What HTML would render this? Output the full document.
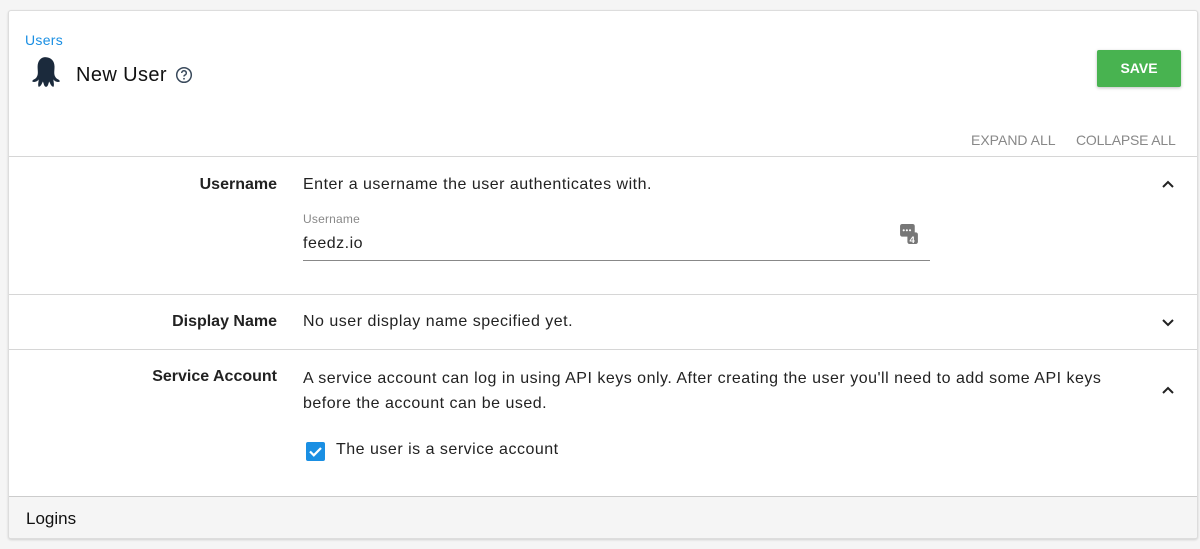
<!DOCTYPE html>
<html><head><style>
body{margin:0;background:#f5f5f5;font-family:"Liberation Sans",Roboto,sans-serif;color:#222;}
.card{position:absolute;left:8px;top:10px;width:1188px;height:527px;background:#fff;border:1px solid #ddd;border-radius:3px;box-shadow:0 1px 2px rgba(0,0,0,.15);overflow:hidden}
.abs{position:absolute}
.line{position:absolute;left:0;width:1188px;height:1px;background:#d6d6d6}
.lab{position:absolute;right:920px;font-weight:bold;font-size:16px;text-align:right}
.txt{position:absolute;left:294px;font-size:16px;color:#222;letter-spacing:0.5px}
.chev{position:absolute;left:1152px;width:14px;height:10px}
</style></head><body>
<div class="card">
<div class="abs" style="left:16px;top:21px;color:#1a8fe3;font-size:14px;letter-spacing:0.3px">Users</div>
<svg class="abs" style="left:18px;top:45px" width="36" height="32" viewBox="0 0 34 30"><path d="M17 1c6 0 9 4 9 9 0 4-1 7 1 10 1 2 4 2 4 4-2 1-5 0-6-2 0 3 1 5 0 7-2 0-3-3-4-5-1 2-1 5-3 5-2 0-2-3-3-5-1 2-2 5-4 5-1-2 0-4 0-7-1 2-4 3-6 2 0-2 3-2 4-4 2-3 1-6 1-10 0-5 3-9 7-9z" fill="#1b2a3c"/></svg>
<div class="abs" style="left:67px;top:53px;font-size:20px;color:#111;letter-spacing:0.4px">New User</div>
<svg class="abs" style="left:166px;top:55px" width="18" height="18" viewBox="0 0 18 18"><circle cx="9" cy="9" r="7.3" fill="none" stroke="#3a4a5c" stroke-width="1.5"/><path d="M6.7 7a2.3 2.3 0 1 1 3 2.2c-.6.3-.7.7-.7 1.3" fill="none" stroke="#3a4a5c" stroke-width="1.5"/><circle cx="9" cy="12.8" r=".9" fill="#3a4a5c"/></svg>
<div class="abs" style="left:1088px;top:39px;width:84px;height:37px;background:#48b350;border-radius:2px;color:#fff;font-size:14px;font-weight:bold;text-align:center;line-height:37px;box-shadow:0 1px 3px rgba(0,0,0,.25)">SAVE</div>
<div class="abs" style="left:962px;top:121px;font-size:14px;color:#888">EXPAND ALL</div>
<div class="abs" style="left:1067px;top:121px;font-size:14px;color:#888;letter-spacing:-0.2px">COLLAPSE ALL</div>
<div class="line" style="top:145px"></div>
<div class="lab" style="top:165px">Username</div>
<div class="txt" style="top:165px">Enter a username the user authenticates with.</div>
<svg class="chev" style="top:168px" viewBox="0 0 14 10"><path d="M2 8l5-5 5 5" fill="none" stroke="#222" stroke-width="2"/></svg>
<div class="txt" style="top:201px;font-size:12px;color:#888;letter-spacing:0.2px">Username</div>
<div class="txt" style="top:224px">feedz.io</div>
<svg class="abs" style="left:891px;top:213px" width="19" height="21" viewBox="0 0 18 20"><rect x="0" y="0" width="14" height="12" rx="2" fill="#777"/><rect x="7" y="8" width="10" height="11" rx="2" fill="#777"/><circle cx="3.5" cy="6" r="1" fill="#fff"/><circle cx="6.5" cy="6" r="1" fill="#fff"/><circle cx="9.5" cy="6" r="1" fill="#fff"/><text x="9" y="18" font-size="9" font-weight="bold" fill="#fff" font-family="Liberation Sans">4</text></svg>
<div class="abs" style="left:294px;top:249px;width:627px;height:1px;background:#888"></div>
<div class="line" style="top:283px"></div>
<div class="lab" style="top:302px">Display Name</div>
<div class="txt" style="top:302px">No user display name specified yet.</div>
<svg class="chev" style="top:307px" viewBox="0 0 14 10"><path d="M2 2l5 5 5-5" fill="none" stroke="#222" stroke-width="2"/></svg>
<div class="line" style="top:338px"></div>
<div class="lab" style="top:357px">Service Account</div>
<div class="txt" style="top:355px;width:820px;line-height:25px">A service account can log in using API keys only. After creating the user you'll need to add some API keys before the account can be used.</div>
<svg class="chev" style="top:374px" viewBox="0 0 14 10"><path d="M2 8l5-5 5 5" fill="none" stroke="#222" stroke-width="2"/></svg>
<svg class="abs" style="left:297px;top:431px" width="19" height="19" viewBox="0 0 19 19"><rect width="19" height="19" rx="2" fill="#1a8fe3"/><path d="M4 9.5l3.8 3.8L15 6" fill="none" stroke="#fff" stroke-width="2.2"/></svg>
<div class="txt" style="left:327px;top:430px">The user is a service account</div>
<div class="abs" style="left:0;top:485px;width:1188px;height:42px;background:#f5f5f5;border-top:1px solid #ccc"></div>
<div class="abs" style="left:17px;top:498px;font-size:17px;color:#111">Logins</div>
</div>
</body></html>
